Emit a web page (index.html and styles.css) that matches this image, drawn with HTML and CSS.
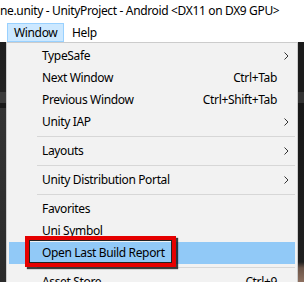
FILE: index.html
```html
<!DOCTYPE html>
<html>
<head>
<meta charset="utf-8">
<link rel="stylesheet" href="styles.css">
</head>
<body>
<div class="screen">
  <div class="title">ne.unity - UnityProject - Android &lt;DX11 on DX9 GPU&gt;</div>
  <div class="menubar">
    <span class="mb-item active">Window</span>
    <span class="mb-item">Help</span>
  </div>
  <div class="workspace">
    <div class="strip left"></div>
    <div class="menu">
      <div class="item"><span class="label">TypeSafe</span><span class="key"></span><span class="arrow"><svg width="5" height="8" viewBox="0 0 5 8"><polyline points="0.5,0.5 4,4 0.5,7.5" fill="none" stroke="#333" stroke-width="1"/></svg></span></div>
      <div class="item"><span class="label">Next Window</span><span class="key">Ctrl+Tab</span><span class="arrow"></span></div>
      <div class="item"><span class="label">Previous Window</span><span class="key">Ctrl+Shift+Tab</span><span class="arrow"></span></div>
      <div class="item"><span class="label">Unity IAP</span><span class="key"></span><span class="arrow"><svg width="5" height="8" viewBox="0 0 5 8"><polyline points="0.5,0.5 4,4 0.5,7.5" fill="none" stroke="#333" stroke-width="1"/></svg></span></div>
      <div class="sep"></div>
      <div class="item"><span class="label">Layouts</span><span class="key"></span><span class="arrow"><svg width="5" height="8" viewBox="0 0 5 8"><polyline points="0.5,0.5 4,4 0.5,7.5" fill="none" stroke="#333" stroke-width="1"/></svg></span></div>
      <div class="sep"></div>
      <div class="item"><span class="label">Unity Distribution Portal</span><span class="key"></span><span class="arrow"><svg width="5" height="8" viewBox="0 0 5 8"><polyline points="0.5,0.5 4,4 0.5,7.5" fill="none" stroke="#333" stroke-width="1"/></svg></span></div>
      <div class="sep"></div>
      <div class="item"><span class="label">Favorites</span><span class="key"></span><span class="arrow"></span></div>
      <div class="item"><span class="label">Uni Symbol</span><span class="key"></span><span class="arrow"></span></div>
      <div class="item selected"><span class="label">Open Last Build Report</span><span class="key"></span><span class="arrow"></span><span class="callout"></span></div>
      <div class="sep"></div>
      <div class="item"><span class="label">Asset Store</span><span class="key">Ctrl+9</span><span class="arrow"></span></div>
    </div>
    <div class="strip right"></div>
  </div>
</div>
</body>
</html>
```

FILE: styles.css
```css
html, body {
  margin: 0;
  padding: 0;
  background: #ffffff;
}
.screen {
  width: 304px;
  height: 282px;
  overflow: hidden;
  font-family: "Noto Sans", "Open Sans", sans-serif;
  font-size: 12px;
  letter-spacing: -0.35px;
  color: #000;
}
.title {
  height: 21px;
  line-height: 21px;
  white-space: nowrap;
  background: #fff;
}
.menubar {
  height: 21px;
  padding-top: 2px;
  box-sizing: border-box;
  display: flex;
  padding-left: 7px;
  background: #fff;
}
.mb-item {
  height: 19px;
  box-sizing: border-box;
  line-height: 17px;
  padding: 0 6px;
  border: 1px solid transparent;
}
.mb-item.active {
  width: 57px;
  background: #cce8ff;
  border-color: #99d1ff;
}
.mb-item + .mb-item {
  padding-left: 7px;
}
.workspace {
  display: flex;
  height: 240px;
}
.strip {
  width: 6px;
  flex: none;
}
.strip.left {
  background: linear-gradient(to bottom, #1e1e1e 0, #232323 50px, #3c3c3c 50px, #3c3c3c 61px, #1a1a1a 61px, #1a1a1a 66px, #333333 66px, #2b2b2b 240px);
}
.strip.right {
  background: linear-gradient(to bottom, #1b1b1b 0, #1b1b1b 50px, #333 50px, #333 61px, #171717 61px, #1f1f1f 220px, #6b5448 226px, #8d7060 240px);
}
.menu {
  flex: 1;
  background: #f2f2f2;
  border: 1px solid #cccccc;
  border-bottom: none;
  padding: 2px 2px 0 2px;
}
.item {
  position: relative;
  height: 22px;
  line-height: 22px;
  display: flex;
  align-items: center;
  white-space: nowrap;
}
.item .label {
  flex: 1;
  padding-left: 33px;
}
.item .key {
  text-align: right;
}
.item .arrow {
  width: 17px;
  flex: none;
  display: flex;
  justify-content: center;
  align-items: center;
  padding-left: 1px;
}
.item .arrow svg {
  display: block;
}
.item.selected {
  background: #91c9f7;
}
.callout {
  position: absolute;
  left: 16px;
  top: -6px;
  width: 151px;
  height: 31px;
  box-sizing: border-box;
  border: 4px solid #e50000;
  box-shadow: inset 1px 1px 0 #222, inset -1px -1px 0 #222, 2px 2px 1px rgba(0,0,0,0.75);
}
.sep {
  height: 7px;
  box-sizing: border-box;
  padding-top: 3px;
  margin-left: 28px;
}
.sep::before {
  content: "";
  display: block;
  height: 1px;
  background: #d7d7d7;
}
```
